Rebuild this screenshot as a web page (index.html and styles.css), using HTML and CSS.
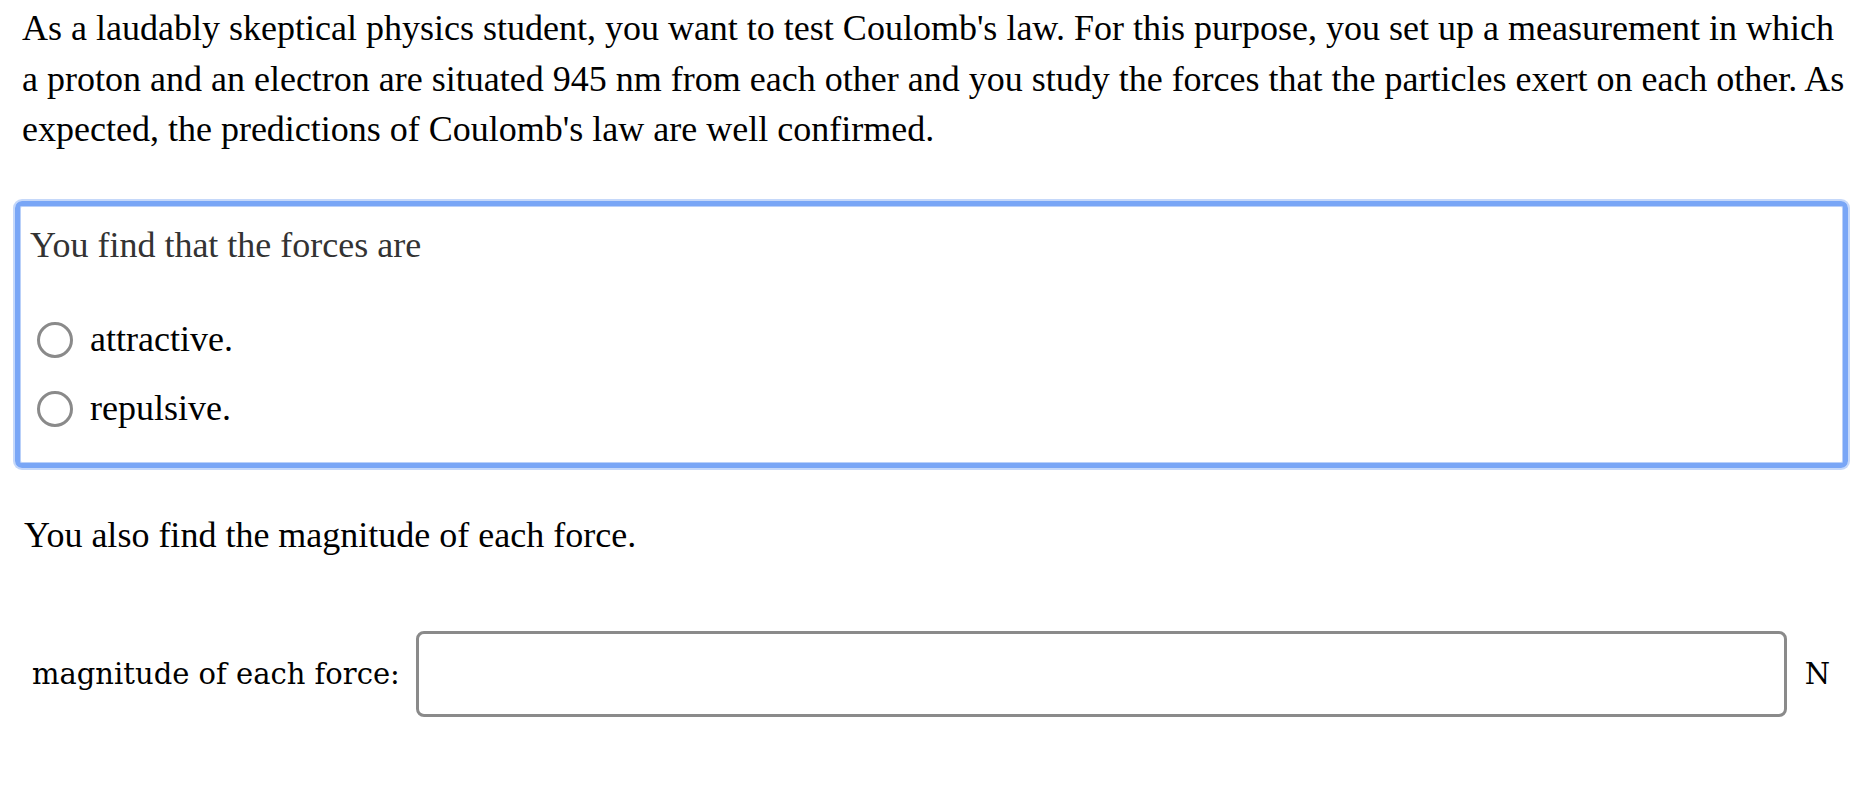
FILE: index.html
```html
<!DOCTYPE html>
<html lang="en">
<head>
<meta charset="utf-8">
<title>Coulomb's law</title>
<link rel="stylesheet" href="styles.css">
</head>
<body>
<main class="page">
  <p class="intro">As a laudably skeptical physics student, you want to test Coulomb's law. For this purpose, you set up a measurement in which a proton and an electron are situated 945 nm from each other and you study the forces that the particles exert on each other. As expected, the predictions of Coulomb's law are well confirmed.</p>

  <div class="question">
    <p class="question-text">You find that the forces are</p>
    <label class="choice"><span class="radio"></span><span class="choice-text">attractive.</span></label>
    <label class="choice"><span class="radio"></span><span class="choice-text">repulsive.</span></label>
  </div>

  <p class="followup">You also find the magnitude of each force.</p>

  <div class="answer-row">
    <span class="answer-label">magnitude of each force:</span>
    <span class="answer-input"></span>
    <span class="answer-unit">N</span>
  </div>
</main>
</body>
</html>
```

FILE: styles.css
```css
html, body {
  margin: 0;
  padding: 0;
  background: #ffffff;
}

body {
  font-family: "Liberation Serif", "Times New Roman", serif;
  font-size: 36px;
  line-height: 50.5px;
  color: #000000;
}

.page {
  padding: 3px 18px 0 13px;
}

.intro {
  margin: 0;
  padding: 0 5px 0 9px;
}

.question {
  margin: 46px 2px 0 2px;
  border: 5px solid #79a6f6;
  border-radius: 7px;
  box-shadow: 0 0 0 2px #c5d8fa, inset 0 0 0 1px #b9d0f9;
  height: 267px;
  box-sizing: border-box;
}

.question-text {
  margin: 0;
  color: #333333;
  padding: 14px 0 0 10px;
}

.choice {
  display: flex;
  align-items: center;
  gap: 17px;
  padding-left: 17px;
  height: 69px;
}

.question-text + .choice {
  margin-top: 35px;
}

.radio {
  width: 36px;
  height: 36px;
  box-sizing: border-box;
  border: 3px solid #8a8a8a;
  border-radius: 50%;
  flex: none;
}

.followup {
  margin: 42px 0 0 0;
  padding: 0 11px;
}

.answer-row {
  display: flex;
  align-items: center;
  margin-top: 71px;
  padding: 0 20px 0 19px;
}

.answer-label {
  font-family: "DejaVu Serif", "Liberation Serif", serif;
  font-size: 29px;
  margin-right: 16px;
}

.answer-input {
  flex: 1;
  height: 86px;
  box-sizing: border-box;
  border: 3px solid #8a8a8a;
  border-radius: 8px;
}

.answer-unit {
  font-family: "DejaVu Serif", "Liberation Serif", serif;
  font-size: 29px;
  margin-left: 18px;
}
```
